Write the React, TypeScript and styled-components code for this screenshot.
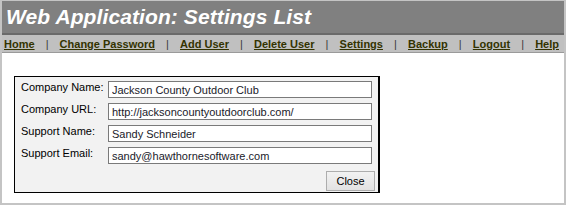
import styled, { createGlobalStyle } from 'styled-components';

const GlobalStyle = createGlobalStyle`
  html, body {
    margin: 0;
    padding: 0;
    background: #ffffff;
    font-family: 'Liberation Sans', Arial, sans-serif;
  }
`;

const Page = styled.div`
  box-sizing: border-box;
  width: 566px;
  height: 205px;
  border: 2px solid #c4c4c4;
  border-top-width: 1px;
  background: #ffffff;
  display: flex;
  flex-direction: column;
`;

const Header = styled.div`
  height: 32px;
  background: #808080;
  border-bottom: 2px solid #6a6a6a;
  display: flex;
  align-items: center;
  padding-left: 4px;
`;

const Title = styled.h1`
  margin: 0;
  font-size: 21px;
  font-weight: bold;
  font-style: italic;
  color: #ffffff;
  letter-spacing: 0.1px;
`;

const Nav = styled.nav`
  height: 17px;
  background: #c0c0c0;
  border-bottom: 1px solid #9a9a9a;
  display: flex;
  align-items: center;
  justify-content: space-between;
  padding: 0 5px 0 2px;
  font-size: 11px;
  font-weight: bold;
`;

const NavLink = styled.a`
  color: #333300;
  text-decoration: underline;
  cursor: pointer;
`;

const Sep = styled.span`
  color: #3a3a3a;
  font-weight: normal;
`;

const Content = styled.div`
  padding: 23px 0 0 12px;
`;

const Dialog = styled.div`
  width: 366px;
  box-sizing: border-box;
  border: 1px solid #000000;
  border-right-width: 2px;
  background: #f2f2f2;
  padding: 4px 3px 1px 6px;
  display: flex;
  flex-direction: column;
`;

const Fields = styled.div`
  display: grid;
  grid-template-columns: 87px 1fr;
  row-gap: 5px;
  margin-right: 3px;
`;

const Label = styled.label`
  font-size: 11px;
  line-height: 13px;
  color: #000000;
  align-self: start;
`;

const Input = styled.input`
  box-sizing: border-box;
  height: 17px;
  width: 100%;
  margin: 0;
  border: 1px solid #7a7a7a;
  background: #ffffff;
  padding: 0 3px;
  font-family: 'Liberation Sans', Arial, sans-serif;
  font-size: 11px;
  color: #1a1a2a;
  outline: none;
`;

const Actions = styled.div`
  display: flex;
  justify-content: flex-end;
  margin-top: 7px;
`;

const Button = styled.button`
  box-sizing: border-box;
  width: 49px;
  height: 20px;
  border: 1px solid #adadad;
  background: linear-gradient(#f2f2f2, #e2e2e2);
  font-family: 'Liberation Sans', Arial, sans-serif;
  font-size: 11px;
  color: #000000;
  padding: 0;
`;

const links = ['Home', 'Change Password', 'Add User', 'Delete User', 'Settings', 'Backup', 'Logout', 'Help'];

const fields = [
  { label: 'Company Name:', value: 'Jackson County Outdoor Club' },
  { label: 'Company URL:', value: 'http://jacksoncountyoutdoorclub.com/' },
  { label: 'Support Name:', value: 'Sandy Schneider' },
  { label: 'Support Email:', value: 'sandy@hawthornesoftware.com' },
];

export default function App() {
  return (
    <>
      <GlobalStyle />
      <Page>
        <Header>
          <Title>Web Application: Settings List</Title>
        </Header>
        <Nav>
          {links.map((l, i) => (
            <>
              {i > 0 && <Sep key={`s${i}`}>|</Sep>}
              <NavLink key={l}>{l}</NavLink>
            </>
          ))}
        </Nav>
        <Content>
          <Dialog>
            <Fields>
              {fields.map((f) => (
                <>
                  <Label key={`l${f.label}`}>{f.label}</Label>
                  <Input key={`i${f.label}`} defaultValue={f.value} />
                </>
              ))}
            </Fields>
            <Actions>
              <Button>Close</Button>
            </Actions>
          </Dialog>
        </Content>
      </Page>
    </>
  );
}
